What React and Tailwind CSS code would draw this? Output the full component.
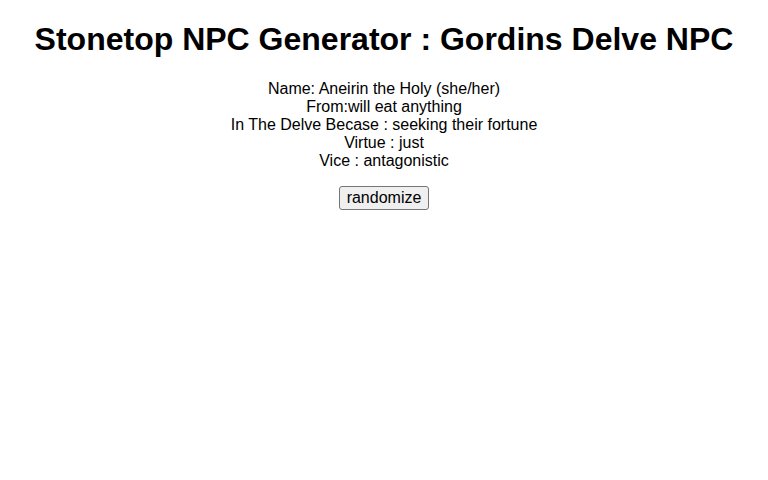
import { useState } from 'react';

const npc = {
  name: 'Aneirin the Holy (she/her)',
  from: 'will eat anything',
  reason: 'seeking their fortune',
  virtue: 'just',
  vice: 'antagonistic',
};

export default function App() {
  const [current] = useState(npc);

  return (
    <div className="min-h-[480px] bg-white text-black text-center font-['Liberation_Sans',Arial,sans-serif]">
      <h1 className="pt-[21px] pb-[22px] text-[32px] font-bold leading-[37px]">
        Stonetop NPC Generator : Gordins Delve NPC
      </h1>
      <div className="text-[16px] leading-[18px]">
        <div>Name: {current.name}</div>
        <div>From:{current.from}</div>
        <div>In The Delve Becase : {current.reason}</div>
        <div>Virtue : {current.virtue}</div>
        <div>Vice : {current.vice}</div>
      </div>
      <div className="mt-[16px]">
        <button className="h-[24px] px-[7px] text-[16px] leading-[20px] bg-[#efefef] border border-[#767676] rounded-[3px] hover:bg-[#e5e5e5]">
          randomize
        </button>
      </div>
    </div>
  );
}
